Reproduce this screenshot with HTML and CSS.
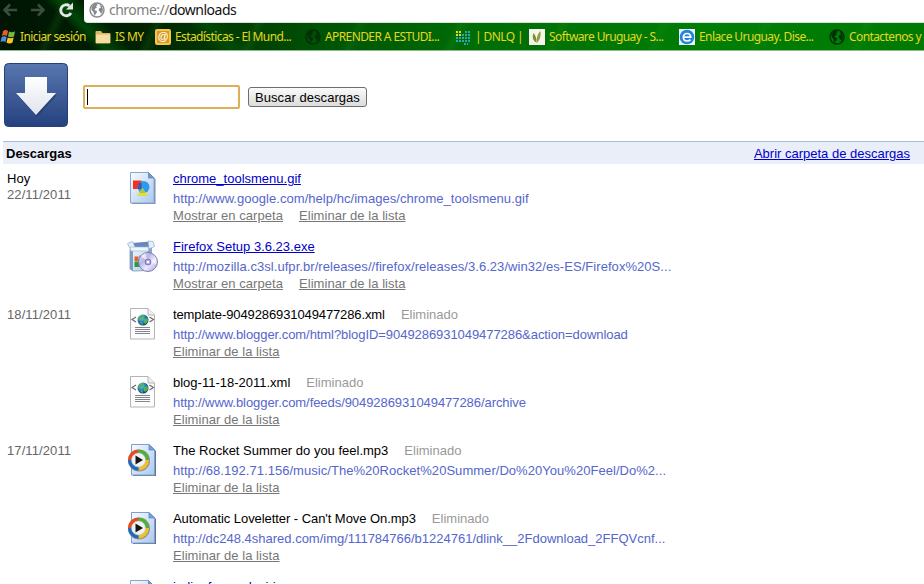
FILE: index.html
```
<!DOCTYPE html>
<html lang="es">
<head>
    <meta charset="UTF-8">
    <title>Descargas</title>
    <link rel="stylesheet" href="styles.css">
</head>
<body>
    <!-- shared icon shapes -->
    <svg class="sprite" aria-hidden="true">
        <defs>
            <linearGradient id="paperBlue" x1="0" y1="0" x2="1" y2="1">
                <stop offset="0" stop-color="#f8fcff"/>
                <stop offset="1" stop-color="#a9c8ee"/>
            </linearGradient>
            <linearGradient id="box" x1="0" y1="0" x2="1" y2="1">
                <stop offset="0" stop-color="#f2f8fd"/>
                <stop offset="1" stop-color="#b4cce6"/>
            </linearGradient>
            <linearGradient id="disc" x1="0" y1="0" x2="1" y2="1">
                <stop offset="0" stop-color="#f4f4ff"/>
                <stop offset=".35" stop-color="#b7b5e6"/>
                <stop offset=".6" stop-color="#eceaff"/>
                <stop offset="1" stop-color="#9c9bd0"/>
            </linearGradient>
            <radialGradient id="earth" cx=".35" cy=".3" r=".8">
                <stop offset="0" stop-color="#7fd4ff"/>
                <stop offset=".5" stop-color="#2477b8"/>
                <stop offset="1" stop-color="#0c2c66"/>
            </radialGradient>
            <linearGradient id="logoBlue" x1="0" y1="0" x2="0" y2="1">
                <stop offset="0" stop-color="#5876b0"/>
                <stop offset="1" stop-color="#26427e"/>
            </linearGradient>
            <linearGradient id="logoArrow" x1="0" y1="0" x2="0" y2="1">
                <stop offset="0" stop-color="#ffffff"/>
                <stop offset="1" stop-color="#dfe3ec"/>
            </linearGradient>
        </defs>
        <symbol id="globe" viewBox="0 0 16 16">
            <circle cx="8" cy="8" r="7" fill="none" stroke="currentColor" stroke-width="1.4"/>
            <path d="M2.500 5L5 2.200l3-.7.500 1.500L7 4.200l1 1.300L6.200 6.500 5.500 8l2.200 1 .3 1.500L6.500 12 6 14 5 12.500l-.5-2.500L2.500 8zM10.500 3l2 .7L14 7l-.5 3-1.500 2-1-2.200-1.300-1.300.3-2L12 5.500z" fill="currentColor"/>
        </symbol>
        <symbol id="image-file" viewBox="0 0 32 32">
            <path d="M6 2h18l5.500 5v25H6z" fill="#7f8ca4"/>
            <path d="M4.500.5h18l5.500 5.500v25H4.500z" fill="url(#paperBlue)" stroke="#8aa6cf"/>
            <path d="M22.500.5V6H28z" fill="#6f9bd4" stroke="#5580b8" stroke-width=".7"/>
            <path d="M7 8.500h8.500V17H7z" fill="#f4321c"/>
            <circle cx="17.500" cy="15" r="6" fill="#1e92ea" opacity=".92"/>
            <path d="M12.500 11h3v6h-3.500z" fill="#5a4a9c"/>
            <path d="M16.500 16l5.500 8H11z" fill="#e4e032"/>
            <path d="M16.500 16l3.400 5h-6.800z" fill="#9ccc50"/>
        </symbol>
        <symbol id="setup-file" viewBox="0 0 32 32">
            <path d="M21 8l5-3v20l-5 5z" fill="#86a8d2"/>
            <path d="M4 9h18v21.500L7 31l-3-2z" fill="url(#box)" stroke="#7c97bd" stroke-width=".8"/>
            <path d="M4 9h3v22l-3-2z" fill="#7d9cc6"/>
            <path d="M6 3l18-1.500L26 6l-4 3.500H5z" fill="#6688bb"/>
            <path d="M1.500 3.500l5-2 2.500 5-4 3.500zM22 1l5 .5 1.500 5L23 9z" fill="#e6f0fa" stroke="#8ba6cc" stroke-width=".7"/>
            <path d="M4.500 7h18v4h-18z" fill="#eef5fc" stroke="#9bb3d4" stroke-width=".6"/>
            <path d="M8.500 16.500h4v4.500h-4z" fill="#e76124"/>
            <path d="M8.500 21.500h5v5.500h-5z" fill="#2b9b43"/>
            <path d="M13 15.500h4v5h-4z" fill="#78b4dc"/>
            <circle cx="22" cy="22" r="9.500" fill="url(#disc)" stroke="#7775a8" stroke-width=".9"/>
            <path d="M22 22l-7-6 4-3zM22 22l8-3 .5 5z" fill="#fff" opacity=".6"/>
            <circle cx="22" cy="22" r="3" fill="#a5a2df" stroke="#6560a8" stroke-width=".7"/>
            <circle cx="22" cy="22" r="1.300" fill="#fff"/>
        </symbol>
        <symbol id="xml-file" viewBox="0 0 32 32">
            <path d="M4.500.5h17.500l6.500 6.500v24h-24z" fill="#fdfdfd" stroke="#b5b5b5"/>
            <path d="M22 .5V7h6.500" fill="#eee" stroke="#b5b5b5"/>
            <path d="M10 9l-4 2.500 4 2.500M23.500 9l4 2.500-4 2.500" fill="none" stroke="#666" stroke-width="1.100"/>
            <circle cx="17" cy="12" r="5.500" fill="url(#earth)"/>
            <path d="M13 8.500l3-1.500 2 1-2 3-2 .5-1.500-1zM18 11l3.500-1 .5 3-2.500 3-2-1.500zM14 14l2.500.5.5 2.500-2-1z" fill="#50b64c"/>
            <path d="M9 19.500h15M9 21.500h15M9 23.500h15M9 25.500h15" stroke="#85858d"/>
        </symbol>
        <symbol id="audio-file" viewBox="0 0 32 32">
            <path d="M7 2h18l5 5v25H7z" fill="#65748a"/>
            <path d="M5.500.5h17.500l5.500 5.500v25h-23z" fill="url(#paperBlue)" stroke="#7ca0cf"/>
            <path d="M23 .5V6h5.500z" fill="#76a6df" stroke="#507fb8" stroke-width=".7"/>
            <circle cx="13" cy="16.500" r="11" fill="#8c9198"/>
            <path d="M12.500 16V5.500A10.500 10.500 0 0 0 2 16z" fill="#e84b1d"/>
            <path d="M12.500 16h10.500A10.500 10.500 0 0 0 12.500 5.500z" fill="#55ae36"/>
            <path d="M12.500 16v10.500A10.500 10.500 0 0 0 23 16z" fill="#f4bf24"/>
            <path d="M12.500 16H2a10.500 10.500 0 0 0 10.500 10.500z" fill="#2368bd"/>
            <circle cx="12.500" cy="16" r="7" fill="#f0f3f3" stroke="#bcc5c8" stroke-width=".6"/>
            <path d="M9.500 11.500l7.500 4.500-7.500 4.500z" fill="#161616"/>
        </symbol>
    </svg>

    <header class="browser">
        <div class="toolbar">
            <div class="nav">
                <svg class="nav-arrow" viewBox="0 0 16 16"><path d="M15 8H3M8 2.500L2.500 8 8 13.500" fill="none" stroke="currentColor" stroke-width="2.600"/></svg>
                <svg class="nav-arrow" viewBox="0 0 16 16"><path d="M1 8h12M8 2.500L13.500 8 8 13.500" fill="none" stroke="currentColor" stroke-width="2.600"/></svg>
                <svg class="reload" viewBox="0 0 16 16"><path d="M13 11A5.500 5.500 0 1 1 11.500 3.800" fill="none" stroke="currentColor" stroke-width="2.800"/><path d="M15 .5v7H8z" fill="currentColor"/></svg>
            </div>
            <div class="omnibox">
                <svg class="icon16"><use href="#globe"/></svg>
                <span class="address"><span class="scheme">chrome://</span>downloads</span>
            </div>
        </div>
        <nav class="bookmarks">
            <a class="bookmark b1">
                <svg class="icon16" viewBox="0 0 16 16">
                    <path d="M3 2q3-2 5 0L7 7Q4.500 5.500 2 7z" fill="#e85c28"/>
                    <path d="M9 2.500q3 1.500 6-.2L14 7.500q-3 1.500-6 0z" fill="#7cb83c"/>
                    <path d="M1.700 8q2.500-1.500 5 0L5.500 13Q3 11.500.5 13z" fill="#4c8fe0"/>
                    <path d="M7.700 8.500q3 1.500 6 0l-1.200 5q-3 1.800-6 0z" fill="#f6c62c"/>
                </svg>
                <span>Iniciar sesión</span>
            </a>
            <a class="bookmark b2">
                <svg class="icon16" viewBox="0 0 16 16">
                    <path d="M.5 3q0-1 1-1h4.500l1.500 2H14.500q1 0 1 1v8.500q0 1-1 1H1.500q-1 0-1-1z" fill="#e0b466"/>
                    <path d="M1 5.500h14v8.500H1z" fill="#f8dda0"/>
                </svg>
                <span>IS MY</span>
            </a>
            <a class="bookmark b3">
                <span class="at-icon">@</span>
                <span>Estadísticas - El Mund...</span>
            </a>
            <a class="bookmark b4">
                <svg class="icon16 dark-globe"><use href="#globe"/></svg>
                <span>APRENDER A ESTUDI...</span>
            </a>
            <a class="bookmark b5">
                <svg class="icon16" viewBox="0 0 16 16">
                    <path d="M1 3h5M1 6h5" stroke="#e2e01c" stroke-width="2" stroke-dasharray="2 1"/>
                    <path d="M1 9h14M1 12h14M7 6h8M10 3h5M9 15h4" stroke="#2aa6b4" stroke-width="2" stroke-dasharray="2 1"/>
                </svg>
                <span>| DNLQ |</span>
            </a>
            <a class="bookmark b6">
                <svg class="icon16" viewBox="0 0 16 16">
                    <path d="M0 0h16v16H0z" fill="#f4f4ec"/>
                    <path d="M7.500 14Q2 10 4.500 4 8 8 7.500 14z" fill="#7a8f28"/>
                    <path d="M8 14Q7 6 11.500 2q1 7-3.500 12z" fill="#8f9e38"/>
                </svg>
                <span>Software Uruguay - S...</span>
            </a>
            <a class="bookmark b7">
                <svg class="icon16" viewBox="0 0 16 16">
                    <path d="M0 0h16v16H0z" fill="#eef6fc"/>
                    <circle cx="8" cy="8" r="7.300" fill="#2384d8"/>
                    <path d="M4.500 8.200h7.200Q11.500 4.500 8 4.500T4.300 8.200Q4.500 12 8.200 12q2 0 3.200-1.300" fill="none" stroke="#fff" stroke-width="1.700"/>
                </svg>
                <span>Enlace Uruguay. Dise...</span>
            </a>
            <a class="bookmark b8">
                <svg class="icon16 dark-globe"><use href="#globe"/></svg>
                <span>Contactenos y C</span>
            </a>
        </nav>
    </header>

    <main class="page">
        <form class="search">
            <svg class="logo" viewBox="0 0 64 64">
                <rect x=".5" y=".5" width="63" height="63" rx="4" fill="url(#logoBlue)" stroke="#254078"/>
                <path d="M22 16h21v16h10L33 54 13 32h9z" fill="#1b3164" opacity=".5"/>
                <path d="M21 14h22v16h9L32 52 12 30h9z" fill="url(#logoArrow)"/>
            </svg>
            <div class="search-box"><span class="caret"></span></div>
            <button class="search-btn" type="button">Buscar descargas</button>
        </form>

        <div class="summary">
            <h1>Descargas</h1>
            <a class="link" href="#">Abrir carpeta de descargas</a>
        </div>

        <div class="downloads">
            <div class="download">
                <div class="date"><div class="since">Hoy</div><div>22/11/2011</div></div>
                <svg class="file-icon"><use href="#image-file"/></svg>
                <div class="info">
                    <div class="name"><a class="link" href="#">chrome_toolsmenu.gif</a></div>
                    <div class="url wide">http://www.google.com/help/hc/images/chrome_toolsmenu.gif</div>
                    <div class="controls"><a href="#">Mostrar en carpeta</a><a href="#">Eliminar de la lista</a></div>
                </div>
            </div>
            <div class="download">
                <div class="date"></div>
                <svg class="file-icon"><use href="#setup-file"/></svg>
                <div class="info">
                    <div class="name"><a class="link" href="#">Firefox Setup 3.6.23.exe</a></div>
                    <div class="url wider">http://mozilla.c3sl.ufpr.br/releases//firefox/releases/3.6.23/win32/es-ES/Firefox%20S...</div>
                    <div class="controls"><a href="#">Mostrar en carpeta</a><a href="#">Eliminar de la lista</a></div>
                </div>
            </div>
            <div class="download">
                <div class="date">18/11/2011</div>
                <svg class="file-icon"><use href="#xml-file"/></svg>
                <div class="info">
                    <div class="name"><span class="narrower">template-9049286931049477286.xml</span><span class="status">Eliminado</span></div>
                    <div class="url narrow">http://www.blogger.com/html?blogID=9049286931049477286&amp;action=download</div>
                    <div class="controls"><a href="#">Eliminar de la lista</a></div>
                </div>
            </div>
            <div class="download">
                <div class="date"></div>
                <svg class="file-icon"><use href="#xml-file"/></svg>
                <div class="info">
                    <div class="name"><span>blog-11-18-2011.xml</span><span class="status">Eliminado</span></div>
                    <div class="url narrow">http://www.blogger.com/feeds/9049286931049477286/archive</div>
                    <div class="controls"><a href="#">Eliminar de la lista</a></div>
                </div>
            </div>
            <div class="download">
                <div class="date">17/11/2011</div>
                <svg class="file-icon"><use href="#audio-file"/></svg>
                <div class="info">
                    <div class="name"><span>The Rocket Summer do you feel.mp3</span><span class="status">Eliminado</span></div>
                    <div class="url wide">http://68.192.71.156/music/The%20Rocket%20Summer/Do%20You%20Feel/Do%2...</div>
                    <div class="controls"><a href="#">Eliminar de la lista</a></div>
                </div>
            </div>
            <div class="download">
                <div class="date"></div>
                <svg class="file-icon"><use href="#audio-file"/></svg>
                <div class="info">
                    <div class="name"><span class="narrow">Automatic Loveletter - Can't Move On.mp3</span><span class="status">Eliminado</span></div>
                    <div class="url">http://dc248.4shared.com/img/111784766/b1224761/dlink__2Fdownload_2FFQVcnf...</div>
                    <div class="controls"><a href="#">Eliminar de la lista</a></div>
                </div>
            </div>
            <div class="download">
                <div class="date"></div>
                <svg class="file-icon"><use href="#image-file"/></svg>
                <div class="info">
                    <div class="name"><a class="link" href="#">indio_fernandosiri</a></div>
                </div>
            </div>
        </div>
    </main>
</body>
</html>
```

FILE: styles.css
```
* {
    box-sizing: border-box;
}
body {
    margin: 0;
    height: 584px;
    overflow: hidden;
    background: #fff;
    color: #000;
    font: 13px/16px "Liberation Sans", Arial, sans-serif;
}
.sprite {
    position: absolute;
    width: 0;
    height: 0;
}
.icon16 {
    width: 16px;
    height: 16px;
    flex: none;
}

/* browser chrome */
.browser {
    height: 51px;
    background:
        linear-gradient(45deg, transparent 66px, rgba(0, 110, 10, .5) 76px, rgba(0, 90, 5, .25) 88px, transparent 94px, transparent 150px, rgba(0, 120, 10, .3) 164px, transparent 180px),
        repeating-linear-gradient(115deg, transparent 0 54px, rgba(50, 160, 40, .15) 60px, transparent 68px 92px),
        linear-gradient(90deg, #001503 0, #002203 140px, #003d03 240px, #005204 320px, #006c06 470px, #007e06 700px, #007a04 100%);
    border-bottom: 1px solid #8abb8a;
}
.toolbar {
    display: flex;
    height: 23px;
}
.nav {
    display: flex;
    width: 84px;
    padding-top: 2px;
    color: #3c4c3e;
}
.nav svg {
    width: 16px;
    height: 16px;
    flex: none;
}
.nav-arrow {
    margin: 0 11px 0 2px;
}
.nav-arrow + .nav-arrow {
    margin: 0 12px 0 1px;
}
.nav .reload {
    color: #e4e8e4;
}
.omnibox {
    display: flex;
    flex: 1;
    gap: 4px;
    padding: 2px 0 0 5px;
    background: #fff;
    border-bottom-left-radius: 4px;
    border-bottom: 1px solid #d5e2d5;
    color: #85898b;
}
.address {
    color: #111;
    font: 14px/16px "Noto Sans", "Open Sans", sans-serif;
    letter-spacing: -.5px;
}
.scheme {
    color: #808080;
}
.bookmarks {
    display: flex;
    align-items: center;
    height: 28px;
    color: #e6d81c;
    font: 12px/14px "Noto Sans", "Open Sans", sans-serif;
    letter-spacing: -.6px;
    white-space: nowrap;
}
.bookmark {
    display: flex;
    flex: none;
    align-items: center;
    gap: 4px;
}
.b1 { width: 95px; }
.b2 { width: 60px; }
.b3 { width: 150px; }
.b4 { width: 150px; }
.b5 { width: 74px; }
.b6 { width: 150px; }
.b7 { width: 150px; }
.dark-globe {
    color: #033006;
}
.at-icon {
    width: 16px;
    height: 16px;
    border: 2px solid #f5c64c;
    border-radius: 2px;
    background: #dc9a1c;
    color: #fff;
    font: bold 11px/11px "Liberation Sans", Arial, sans-serif;
    letter-spacing: 0;
    text-align: center;
}

/* search header */
.search {
    display: flex;
    align-items: center;
    height: 90px;
    padding: 0 0 2px 4px;
}
.logo {
    width: 64px;
    height: 64px;
    margin-right: 15px;
}
.search-box {
    width: 157px;
    height: 24px;
    margin: 4px 8px 0 0;
    padding: 2px 2px;
    border: 2px solid #dfae58;
    border-radius: 2px;
    background: #fff;
}
.caret {
    display: block;
    width: 1px;
    height: 16px;
    background: #000;
}
.search-btn {
    width: 119px;
    height: 20px;
    margin: 4px 0 0;
    padding: 1px 0 0;
    border: 1px solid #6e6e6e;
    border-radius: 3px;
    background: linear-gradient(#fafafa, #dcdcdc);
    color: #000;
    font: 13px/16px "Liberation Sans", Arial, sans-serif;
    letter-spacing: .05px;
}

/* list */
.summary {
    display: flex;
    justify-content: space-between;
    height: 23px;
    margin-left: 3px;
    padding: 4px 14px 0 3px;
    border-top: 1px solid #a3bfdd;
    background: #e9eef9;
}
.summary h1 {
    margin: 0;
    font-size: 13px;
    line-height: 16px;
}
.link {
    color: #0000cc;
}
.downloads {
    padding: 7px 0 0 7px;
}
.download {
    display: flex;
    height: 68px;
    white-space: nowrap;
}
.date {
    width: 119px;
    color: #666;
    letter-spacing: .1px;
}
.since {
    color: #000;
}
.file-icon {
    width: 32px;
    height: 32px;
    margin: 1px 15px 0 0;
    flex: none;
}
.url {
    margin-top: 4px;
    color: #5566cc;
}
.controls {
    display: flex;
    gap: 16px;
    margin-top: 1px;
}
.controls a {
    color: #777;
    letter-spacing: .05px;
}
.status {
    margin-left: 16px;
    color: #999;
}

/* tracking */
.wide {
    letter-spacing: .04px;
}
.wider {
    letter-spacing: .055px;
}
.narrow {
    letter-spacing: -.06px;
}
.narrower {
    letter-spacing: -.11px;
}
```
